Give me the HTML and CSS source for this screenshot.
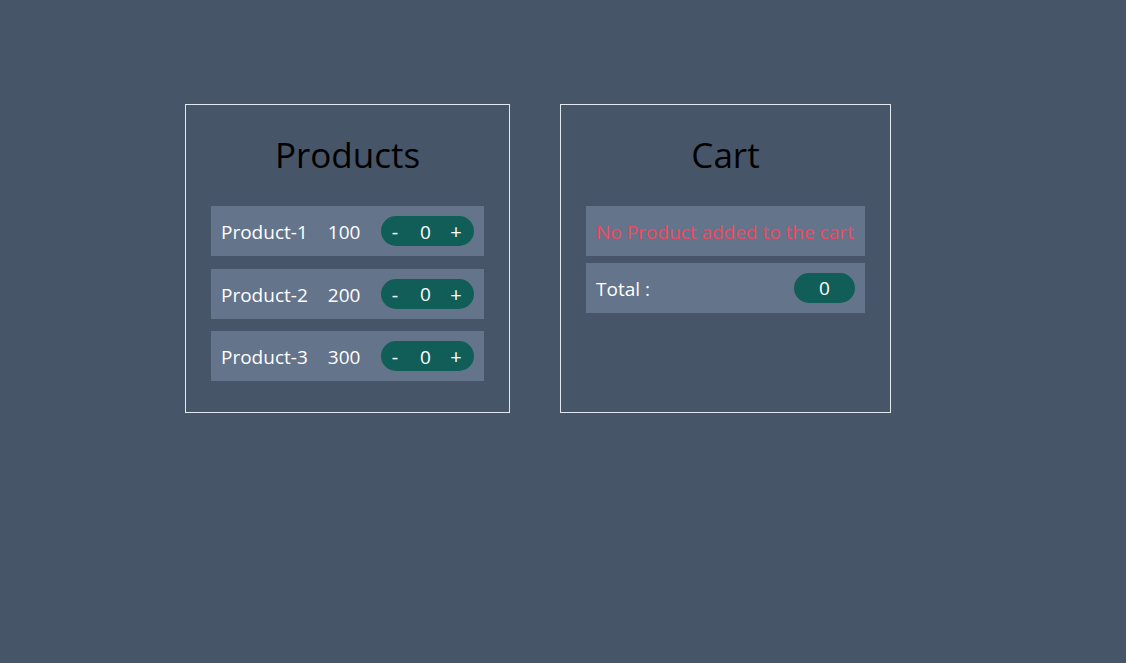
FILE: index.html
```html
<!DOCTYPE html>
<html lang="en">
<head>
    <meta charset="UTF-8">
    <meta name="viewport" content="width=device-width, initial-scale=1.0">
    <title>Shopping Cart</title>
    <link rel="stylesheet" href="styles.css">
</head>
<body>
    <div class="wrapper">
        <!-- Products -->
        <div class="panel products">
            <h1>Products</h1>
            <div class="list">
                <div class="row">
                    <span class="name">Product-1</span>
                    <span class="price">100</span>
                    <div class="counter">
                        <button class="btn">-</button>
                        <span class="count">0</span>
                        <button class="btn">+</button>
                    </div>
                </div>
                <div class="row">
                    <span class="name">Product-2</span>
                    <span class="price">200</span>
                    <div class="counter">
                        <button class="btn">-</button>
                        <span class="count">0</span>
                        <button class="btn">+</button>
                    </div>
                </div>
                <div class="row">
                    <span class="name">Product-3</span>
                    <span class="price">300</span>
                    <div class="counter">
                        <button class="btn">-</button>
                        <span class="count">0</span>
                        <button class="btn">+</button>
                    </div>
                </div>
            </div>
        </div>

        <!-- Cart -->
        <div class="panel cart">
            <h1>Cart</h1>
            <div class="cart-list">
                <div class="row empty">No Product added to the cart</div>
                <div class="row total">
                    <span>Total :</span>
                    <span class="total-pill">0</span>
                </div>
            </div>
        </div>
    </div>
</body>
</html>
```

FILE: styles.css
```css
body {
    font-family: "Open Sans", "Noto Sans", sans-serif;
    background-color: #475569;
    margin: 0;
}
.wrapper {
    display: flex;
    gap: 50px;
    padding: 104px 0 0 185px;
}
.panel {
    border: 1px solid #e2e8f0;
    padding: 25px 25px 31px;
}
.products {
    width: 273px;
}
.cart {
    width: 279px;
}
h1 {
    margin: 0 0 26px;
    font-size: 35px;
    font-weight: 400;
    line-height: 50px;
    text-align: center;
    color: #000;
}
.list {
    display: flex;
    flex-direction: column;
    gap: 12.5px;
}
.cart-list {
    display: flex;
    flex-direction: column;
    gap: 7px;
}
.row {
    box-sizing: border-box;
    display: flex;
    align-items: center;
    gap: 20px;
    height: 50px;
    padding: 2px 10px 0;
    background-color: #64748b;
    color: #fff;
    font-size: 19px;
}
.counter {
    display: flex;
    align-items: center;
    margin: -2px 0 0 auto;
    width: 81px;
    height: 30px;
    padding: 1px 8px 0 4px;
    box-sizing: content-box;
    height: 29px;
    border-radius: 15px;
    background-color: #115e59;
}
.btn {
    width: 20px;
    padding: 0;
    border: none;
    background: none;
    color: #fff;
    font-family: inherit;
    font-size: 20px;
    cursor: pointer;
}
.count {
    flex: 1;
    text-align: center;
}
.empty {
    color: #f2485f;
    white-space: nowrap;
}
.total {
    justify-content: space-between;
}
.total-pill {
    margin-top: -2px;
    width: 61px;
    height: 30px;
    line-height: 31px;
    border-radius: 15px;
    background-color: #115e59;
    text-align: center;
}
```
